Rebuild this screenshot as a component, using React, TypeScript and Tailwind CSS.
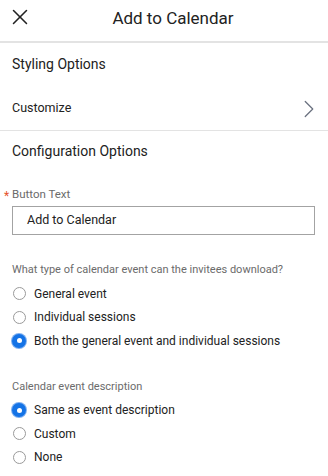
import { X, ChevronRight } from 'lucide-react';

const Radio = ({ label, checked = false }: { label: string; checked?: boolean }) => (
    <label className="flex items-center gap-[8px] h-[23.5px] whitespace-nowrap">
        {checked ? (
            <span className="w-[14px] h-[14px] rounded-full bg-[#1473e6] flex items-center justify-center shadow-[0_0_0_1px_#7fb0f0]">
                <span className="w-[5px] h-[5px] rounded-full bg-white" />
            </span>
        ) : (
            <span className="w-[13px] h-[13px] ml-[0.5px] mr-[0.5px] rounded-full border border-[#9a9a9a] bg-white" />
        )}
        <span className="text-[12px] text-[#222]">{label}</span>
    </label>
);

export default function App() {
    return (
        <div className="w-[328px] h-[476px] bg-white overflow-hidden" style={{ fontFamily: 'Roboto, "Noto Sans", sans-serif' }}>
            {/* Header */}
            <div className="relative h-[43px] flex items-center justify-center border-b-2 border-[#e3e3e3]">
                <X size={26} strokeWidth={1.4} className="absolute left-[7px] top-[4px] text-[#222]" />
                <span className="text-[17px] text-[#222] ml-[18px] -mt-[4px]">Add to Calendar</span>
            </div>

            {/* Styling */}
            <div className="px-3 border-b border-[#e3e3e3]">
                <div className="pt-[11px] h-[46px] text-[14px] text-[#222]">Styling Options</div>
                <div className="flex items-center justify-between h-[41px] pb-[2px]">
                    <span className="text-[12.5px] text-[#222]">Customize</span>
                    <ChevronRight size={30} strokeWidth={1} className="text-[#6b7280] -mr-[8px]" />
                </div>
            </div>

            {/* Configuration */}
            <div className="px-3">
                <div className="pt-[10px] h-[55px] text-[14px] text-[#222]">Configuration Options</div>

                <div className="relative text-[11.5px] text-[#6b6b6b] h-[20px]">
                    <span className="absolute -left-[8px] top-[1px] text-[#e5532d] text-[12px]">*</span>
                    Button Text
                </div>
                <div className="h-[29px] border border-[#a3a3a3] flex items-center px-[14px] text-[12.5px] text-[#222] mr-[1px]">
                    Add to Calendar
                </div>

                <div className="mt-[27px] text-[11px] text-[#6b6b6b] h-[20px] whitespace-nowrap">What type of calendar event can the invitees download?</div>
                <Radio label="General event" />
                <Radio label="Individual sessions" />
                <Radio label="Both the general event and individual sessions" checked />

                <div className="mt-[26px] text-[11px] text-[#6b6b6b] h-[20px]">Calendar event description</div>
                <Radio label="Same as event description" checked />
                <Radio label="Custom" />
                <Radio label="None" />
            </div>
        </div>
    );
}
